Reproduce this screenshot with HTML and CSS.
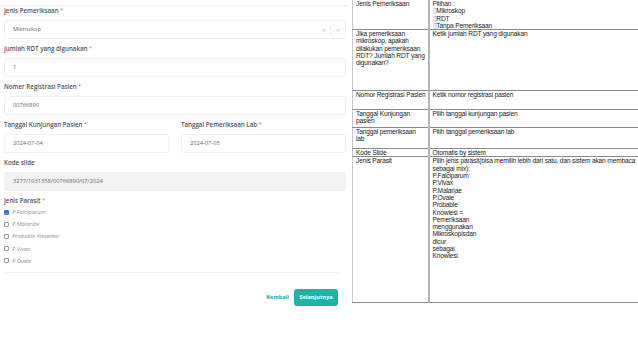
FILE: index.html
```html
<!DOCTYPE html>
<html lang="id">
<head>
    <meta charset="UTF-8">
    <meta name="viewport" content="width=device-width, initial-scale=1.0">
    <title>Form Pemeriksaan</title>
    <link rel="stylesheet" href="styles.css">
</head>
<body>
    <div id="wrap">
        <!-- form kiri -->
        <div class="form-pane">
            <div class="topbar"></div>

            <div class="field">
                <label>Jenis Pemeriksaan <span class="req">*</span></label>
                <div class="input select">
                    <span class="val">Mikroskop</span>
                    <span class="sel-tools">
                        <span class="clear">&times;</span>
                        <span class="sep"></span>
                        <svg class="chev" width="6" height="4" viewBox="0 0 6 4"><path d="M0.5 0.8 L3 3.2 L5.5 0.8" fill="none" stroke="#bbb" stroke-width="0.8"/></svg>
                    </span>
                </div>
            </div>

            <div class="field">
                <label>Jumlah RDT yang digunakan <span class="req">*</span></label>
                <div class="input">1</div>
            </div>

            <div class="field">
                <label>Nomer Registrasi Pasien <span class="req">*</span></label>
                <div class="input">00766890</div>
            </div>

            <div class="row">
                <div class="field">
                    <label>Tanggal Kunjungan Pasien <span class="req">*</span></label>
                    <div class="input">2024-07-04</div>
                </div>
                <div class="field">
                    <label>Tanggal Pemeriksaan Lab <span class="req">*</span></label>
                    <div class="input">2024-07-05</div>
                </div>
            </div>

            <div class="field">
                <label>Kode slide</label>
                <div class="input disabled">3277/1031358/00766890/07/2024</div>
            </div>

            <div class="field checks">
                <label>Jenis Parasit <span class="req">*</span></label>
                <div class="check"><span class="box on"><svg width="5" height="5" viewBox="0 0 5 5"><path d="M1 2.6 L2.1 3.6 L4 1.3" fill="none" stroke="#fff" stroke-width="0.9"/></svg></span>P.Falciparum</div>
                <div class="check"><span class="box"></span>P.Malariae</div>
                <div class="check"><span class="box"></span>Probable Knowlesi</div>
                <div class="check"><span class="box"></span>P.Vivax</div>
                <div class="check"><span class="box"></span>P.Ovale</div>
            </div>

            <div class="divider"></div>

            <div class="actions">
                <button class="btn-link">Kembali</button>
                <button class="btn-main">Selanjutnya</button>
            </div>
        </div>

        <!-- tabel keterangan kanan -->
        <div class="doc-pane">
            <table class="doc">
                <tr class="r1">
                    <td>Jenis Pemeriksaan</td>
                    <td>Pilihan :<br><span class="sq">&#9647;</span>Mikroskop<br><span class="sq">&#9647;</span>RDT<br><span class="sq">&#9647;</span>Tanpa Pemeriksaan</td>
                </tr>
                <tr class="r2">
                    <td>Jika pemeriksaan<br>mikroskop, apakah<br>dilakukan pemeriksaan<br>RDT? Jumlah RDT yang<br>digunakan?</td>
                    <td>Ketik jumlah RDT yang digunakan</td>
                </tr>
                <tr class="r3">
                    <td>Nomor Registrasi Pasien</td>
                    <td>Ketik nomor registrasi pasien</td>
                </tr>
                <tr class="r4">
                    <td>Tanggal Kunjungan<br>pasien</td>
                    <td>Pilih tanggal kunjungan pasien</td>
                </tr>
                <tr class="r5">
                    <td>Tanggal pemeriksaan<br>lab</td>
                    <td>Pilih tanggal pemeriksaan lab</td>
                </tr>
                <tr class="r6">
                    <td>Kode Slide</td>
                    <td>Otomatis by sistem</td>
                </tr>
                <tr class="r7">
                    <td>Jenis Parasit</td>
                    <td>Pilih jenis parasit(bisa memilih lebih dari satu, dan sistem akan membaca<br>sebagai mix):<br>P.Falciparum<br>P.Vivax<br>P.Malariae<br>P.Ovale<br>Probable<br>Knowlesi =<br>Pemeriksaan<br>menggunakan<br>Mikroskopisdan<br>dicur<br>sebagai<br>Knowlesi.</td>
                </tr>
            </table>
        </div>
    </div>
</body>
</html>
```

FILE: styles.css
```css
* { margin: 0; padding: 0; box-sizing: border-box; }

body {
    width: 638px;
    height: 359px;
    overflow: hidden;
    background: #fff;
    font-family: "Open Sans", "Noto Sans", sans-serif;
}

#wrap {
    display: flex;
    align-items: flex-start;
}

/* form */
.form-pane {
    width: 348px;
    flex: none;
    padding: 0 2px 0 4px;
}

.topbar {
    height: 6px;
    margin: 0 -2px 0 -4px;
    border-bottom: 1px solid #f1f1f1;
    box-shadow: 0 1px 2px rgba(0, 0, 0, 0.03);
}

.field { margin-bottom: 5px; }

.field label {
    display: block;
    font-size: 6.2px;
    font-weight: 600;
    color: #555;
    line-height: 10px;
    margin-bottom: 4px;
}

.req {
    color: #e46a6a;
    font-size: 5px;
    vertical-align: top;
    line-height: 8px;
}

.input {
    height: 19px;
    border: 1px solid #f0f0f0;
    border-radius: 3px;
    padding: 0 8px;
    font-size: 5.7px;
    color: #666;
    line-height: 17px;
    display: flex;
    align-items: center;
}

.input.disabled {
    background: #f2f2f2;
    border-color: #f2f2f2;
}

.select { justify-content: space-between; padding-right: 4px; }

.sel-tools {
    display: flex;
    align-items: center;
    gap: 4px;
}

.clear { color: #c4c4c4; font-size: 8px; }

.sep {
    width: 1px;
    height: 10px;
    background: #eee;
}

.row {
    display: flex;
    gap: 12px;
}

.row .field { flex: 1; }

.checks label { margin-bottom: 0; }

.check {
    display: flex;
    align-items: center;
    height: 12.2px;
    font-size: 5.8px;
    font-style: italic;
    color: #8f8f8f;
}

.box {
    width: 5px;
    height: 5px;
    border: 0.7px solid #999;
    border-radius: 1px;
    margin-right: 3px;
    display: flex;
}

.box.on {
    background: #2a6fd6;
    border-color: #2a6fd6;
}

.divider {
    height: 1px;
    background: #f0f0f0;
    margin: 0 6px 0 0;
}

.actions {
    display: flex;
    justify-content: flex-end;
    align-items: center;
    gap: 5px;
    padding: 16px 8px 0 0;
}

.actions button {
    appearance: none;
    border: 0;
    font-family: "Open Sans", sans-serif;
    font-size: 5.6px;
    font-weight: 700;
}

.btn-link {
    background: none;
    color: #1fa99d;
}

.btn-main {
    background: #20b2a5;
    color: #fff;
    height: 17px;
    width: 44px;
    border-radius: 3px;
}

/* tabel */
.doc-pane {
    flex: 1;
    min-width: 0;
    overflow: hidden;
    padding-left: 4px;
    margin-top: -1px;
}

.doc {
    border-collapse: collapse;
    font-family: "Liberation Sans", Arial, sans-serif;
    font-size: 6.6px;
    line-height: 7.3px;
    color: #1a1a1a;
    letter-spacing: -0.15px;
}

.doc td {
    vertical-align: top;
    padding: 0 2px 0 3px;
    border-top: 1px solid #8a8a8a;
    border-bottom: 1px solid #8a8a8a;
    white-space: nowrap;
}

.doc td:first-child {
    width: 83px;
    border-left: 1px solid #c8c8c8;
    border-right: 2px solid #b4b4b4;
}

.doc td:last-child { width: 420px; }

.sq { color: #888; }

.r1 { height: 30px; }
.r2 { height: 61px; }
.r3 { height: 19px; }
.r4 { height: 18px; }
.r5 { height: 21px; }
.r6 { height: 8px; }
.r7 { height: 146px; }
```
